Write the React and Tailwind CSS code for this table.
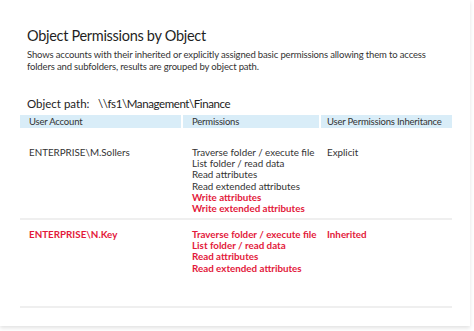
import React from "react";

const red = "text-[#e3193b] font-bold";

const rows = [
  {
    account: "ENTERPRISE\\M.Sollers",
    accountRed: false,
    perms: [
      ["Traverse folder / execute file", false],
      ["List folder / read data", false],
      ["Read attributes", false],
      ["Read extended attributes", false],
      ["Write attributes", true],
      ["Write extended attributes", true],
    ],
    inherit: "Explicit",
    inheritRed: false,
    height: "h-[92px] pt-[19px]",
  },
  {
    account: "ENTERPRISE\\N.Key",
    accountRed: true,
    perms: [
      ["Traverse folder / execute file", true],
      ["List folder / read data", true],
      ["Read attributes", true],
      ["Read extended attributes", true],
    ],
    inherit: "Inherited",
    inheritRed: true,
    height: "h-[88px] pt-[9px]",
  },
];

export default function App() {
  return (
    <div
      className="w-[474px] h-[331px] bg-white overflow-hidden text-[#333] whitespace-nowrap"
      style={{ fontFamily: 'Lato, "Noto Sans", sans-serif' }}
    >
      {/* card */}
      <div className="w-[470px] h-[326px] bg-white shadow-[0_2px_4px_rgba(0,0,0,0.12)] pt-[26px]">
        <div className="px-[27px]">
          <h1 className="text-[14.5px] leading-[20px] tracking-[-0.3px] text-[#1f1f1f]">
            Object Permissions by Object
          </h1>
          <p className="text-[9.5px] leading-[12px] mt-[3px] tracking-[-0.15px] text-[#333]">
            Shows accounts with their inherited or explicitly assigned basic permissions allowing them to access
            <br />
            folders and subfolders, results are grouped by object path.
          </p>
          <div className="mt-[23px] flex text-[11.5px] leading-[16px] text-[#222]">
            <span className="w-[71px] shrink-0">Object path:</span>
            <span className="tracking-[-0.4px]">\\fs1\Management\Finance</span>
          </div>
        </div>

        {/* table */}
        <div className="ml-[20px] w-[432px] mt-[3px]">
          <div className="flex gap-[2px] h-[13px] text-[9.5px] leading-[13px] tracking-[-0.2px] text-[#333]">
            <div className="w-[161px] bg-[#d9edf8] pl-[9px]">User Account</div>
            <div className="w-[136px] bg-[#d9edf8] pl-[9px]">Permissions</div>
            <div className="flex-1 bg-[#d9edf8] pl-[6px]">User Permissions Inheritance</div>
          </div>

          {rows.map((r, i) => (
            <div
              key={i}
              className={`flex text-[9.8px] leading-[11.2px] border-b-2 border-[#efefef] ${r.height}`}
            >
              <div className={`w-[163px] pl-[9px] ${r.accountRed ? red : ""}`}>{r.account}</div>
              <div className="w-[138px] pl-[9px]">
                {r.perms.map(([t, isRed]) => (
                  <div key={t} className={isRed ? red : ""}>
                    {t}
                  </div>
                ))}
              </div>
              <div className={`flex-1 pl-[6px] ${r.inheritRed ? red : ""}`}>{r.inherit}</div>
            </div>
          ))}
        </div>
      </div>
    </div>
  );
}
